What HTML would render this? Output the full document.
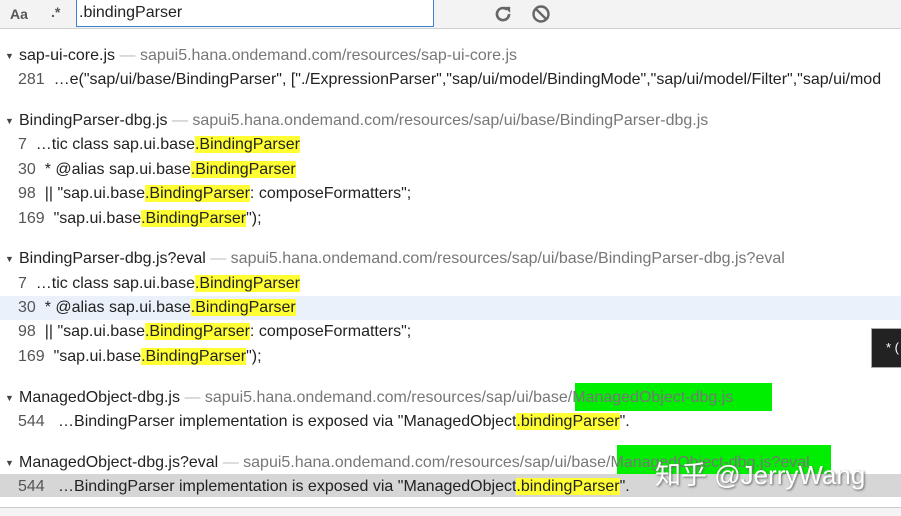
<!DOCTYPE html><html><head><style>
body{margin:0;width:901px;height:515px;background:#fff;font-family:"Liberation Sans",sans-serif;font-size:16px;color:#222;position:relative;overflow:hidden}
.tb{position:absolute;left:0;top:0;width:901px;height:28px;background:#f3f3f3;border-bottom:1px solid #d0d0d0}
.in{position:absolute;left:76px;top:-1px;width:354px;height:26px;border:1px solid #3b82d6;background:#fff;font-size:16px;line-height:26px;padding-left:2px;color:#222}
.r{position:absolute;left:0;height:24px;line-height:24px;white-space:nowrap;width:901px}
.f{padding-left:19px}
.tri{position:absolute;left:5px;top:0;font-size:9px;color:#444}
.u{color:#777}
.d{color:#bbb}
.l{padding-left:18px}
.y{background:#ffff33}
.g{position:absolute;background:#00ee00}
</style></head><body>
<div class="tb">
<span style="position:absolute;left:10px;top:6px;font-weight:bold;font-size:14px;color:#555">Aa</span>
<span style="position:absolute;left:51px;top:4px;font-weight:bold;font-size:14px;color:#555">.*</span>
<div class="in">.bindingParser</div>
<svg style="position:absolute;left:492px;top:3px" width="22" height="22" viewBox="0 0 20 20"><path d="M15.5 10a5.5 5.5 0 1 1-1.8-4" fill="none" stroke="#666" stroke-width="2.4"/><path d="M11 3.5h5.5v5.5z" fill="#666"/></svg>
<svg style="position:absolute;left:530px;top:3px" width="22" height="22" viewBox="0 0 20 20"><circle cx="10" cy="10" r="6.8" fill="none" stroke="#666" stroke-width="2.2"/><path d="M5.5 5.5l9 9" stroke="#666" stroke-width="2.2"/></svg>
</div>
<div class="r f" style="top:44px"><span class="tri">▼</span>sap-ui-core.js <span class="d">—</span> <span class="u">sapui5.hana.ondemand.com/resources/sap-ui-core.js</span></div>
<div class="r l" style="top:68px"><span style="color:#555">281</span>&nbsp;&nbsp;…e("sap/ui/base/BindingParser", ["./ExpressionParser","sap/ui/model/BindingMode","sap/ui/model/Filter","sap/ui/mod</div>
<div class="r f" style="top:109px"><span class="tri">▼</span>BindingParser-dbg.js <span class="d">—</span> <span class="u">sapui5.hana.ondemand.com/resources/sap/ui/base/BindingParser-dbg.js</span></div>
<div class="r l" style="top:133px"><span style="color:#555">7</span>&nbsp;&nbsp;…tic class sap.ui.base<span class="y">.BindingParser</span></div>
<div class="r l" style="top:158px"><span style="color:#555">30</span>&nbsp;&nbsp;* @alias sap.ui.base<span class="y">.BindingParser</span></div>
<div class="r l" style="top:182px"><span style="color:#555">98</span>&nbsp;&nbsp;|| "sap.ui.base<span class="y">.BindingParser</span>: composeFormatters";</div>
<div class="r l" style="top:207px"><span style="color:#555">169</span>&nbsp;&nbsp;"sap.ui.base<span class="y">.BindingParser</span>");</div>
<div class="r f" style="top:247px"><span class="tri">▼</span>BindingParser-dbg.js?eval <span class="d">—</span> <span class="u">sapui5.hana.ondemand.com/resources/sap/ui/base/BindingParser-dbg.js?eval</span></div>
<div class="r l" style="top:272px"><span style="color:#555">7</span>&nbsp;&nbsp;…tic class sap.ui.base<span class="y">.BindingParser</span></div>
<div class="r l" style="top:296px;background:#eaf1fb"><span style="color:#555">30</span>&nbsp;&nbsp;* @alias sap.ui.base<span class="y">.BindingParser</span></div>
<div class="r l" style="top:320px"><span style="color:#555">98</span>&nbsp;&nbsp;|| "sap.ui.base<span class="y">.BindingParser</span>: composeFormatters";</div>
<div class="r l" style="top:345px"><span style="color:#555">169</span>&nbsp;&nbsp;"sap.ui.base<span class="y">.BindingParser</span>");</div>
<div style="position:absolute;left:871px;top:328px;width:40px;height:38px;background:#222;border:1px solid #aaa;color:#fff;font-size:13px;line-height:38px;padding-left:14px">* (</div>
<div class="g" style="left:575px;top:383px;width:197px;height:28px"></div>
<div class="g" style="left:617px;top:445px;width:214px;height:29px"></div>
<div class="r f" style="top:386px"><span class="tri">▼</span>ManagedObject-dbg.js <span class="d">—</span> <span class="u">sapui5.hana.ondemand.com/resources/sap/ui/base/ManagedObject-dbg.js</span></div>
<div class="r l" style="top:410px"><span style="color:#555">544</span>&nbsp;&nbsp;&nbsp;…BindingParser implementation is exposed via "ManagedObject<span class="y">.bindingParser</span>".</div>
<div class="r" style="top:474px;background:#d6d6d6;height:23px"></div>
<div class="r f" style="top:451px"><span class="tri">▼</span>ManagedObject-dbg.js?eval <span class="d">—</span> <span class="u">sapui5.hana.ondemand.com/resources/sap/ui/base/ManagedObject-dbg.js?eval</span></div>
<div class="r l" style="top:475px"><span style="color:#555">544</span>&nbsp;&nbsp;&nbsp;…BindingParser implementation is exposed via "ManagedObject<span class="y">.bindingParser</span>".</div>
<div style="position:absolute;left:655px;top:455px;font-family:'Liberation Sans','Noto Sans CJK SC',sans-serif;font-size:26px;color:#fff;text-shadow:1px 1px 2px #666;white-space:nowrap">知乎 @JerryWang</div>
<div style="position:absolute;left:0;top:507px;width:901px;height:8px;background:#f3f3f3;border-top:1px solid #ccc"></div>
</body></html>
